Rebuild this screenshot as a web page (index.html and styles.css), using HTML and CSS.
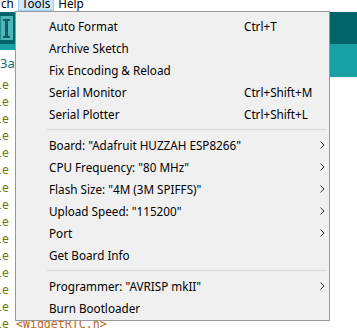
FILE: index.html
```html
<!DOCTYPE html>
<html>
<head>
  <meta charset="utf-8">
  <title>Arduino - Tools menu</title>
  <link rel="stylesheet" href="styles.css">
</head>
<body>
  <div class="window">
    <div class="menubar">
      <span class="menu-title first">ch</span>
      <span class="menu-title active">Tools</span>
      <span class="menu-title">Help</span>
    </div>

    <div class="toolbar">
      <svg class="tool-btn" width="16" height="32" viewBox="0 0 16 32">
        <rect x="0" y="4" width="13" height="24" fill="#4db7bb"/>
        <rect x="0" y="4" width="1" height="24" fill="#1f8a8e"/>
        <rect x="3" y="7" width="7" height="2" fill="#0b5f63"/>
        <rect x="5" y="9" width="3" height="16" fill="#0b5f63"/>
        <rect x="3" y="24" width="7" height="2" fill="#0b5f63"/>
        <rect x="14" y="13" width="1" height="2" fill="#0b5f63"/>
      </svg>
    </div>

    <div class="tabbar">
      <div class="tab">3a</div>
    </div>

    <div class="editor">
      <div class="line">le</div>
      <div class="line">le</div>
      <div class="line">le</div>
      <div class="line">le</div>
      <div class="line">le</div>
      <div class="line">le</div>
      <div class="line">le</div>
      <div class="line">le</div>
      <div class="line">le</div>
      <div class="line">le</div>
      <div class="line">le</div>
      <div class="line">le</div>
      <div class="line">le</div>
      <div class="line">le</div>
      <div class="line">le <span class="lib">&lt;WidgetRTC.h&gt;</span></div>
    </div>
  </div>

  <!-- Tools dropdown, open over the editor -->
  <div class="dropdown">
    <div class="item"><span>Auto Format</span><span>Ctrl+T</span></div>
    <div class="item"><span>Archive Sketch</span></div>
    <div class="item"><span>Fix Encoding &amp; Reload</span></div>
    <div class="item"><span>Serial Monitor</span><span>Ctrl+Shift+M</span></div>
    <div class="item"><span>Serial Plotter</span><span>Ctrl+Shift+L</span></div>
    <div class="sep"></div>
    <div class="item sub"><span>Board: "Adafruit HUZZAH ESP8266"</span><span></span>
      <svg class="arrow" width="5" height="8" viewBox="0 0 5 8"><path d="M0.5 0.5 L4 4 L0.5 7.5" fill="none" stroke="#333" stroke-width="1"/></svg></div>
    <div class="item sub"><span>CPU Frequency: "80 MHz"</span><span></span>
      <svg class="arrow" width="5" height="8" viewBox="0 0 5 8"><path d="M0.5 0.5 L4 4 L0.5 7.5" fill="none" stroke="#333" stroke-width="1"/></svg></div>
    <div class="item sub"><span>Flash Size: "4M (3M SPIFFS)"</span><span></span>
      <svg class="arrow" width="5" height="8" viewBox="0 0 5 8"><path d="M0.5 0.5 L4 4 L0.5 7.5" fill="none" stroke="#333" stroke-width="1"/></svg></div>
    <div class="item sub"><span>Upload Speed: "115200"</span><span></span>
      <svg class="arrow" width="5" height="8" viewBox="0 0 5 8"><path d="M0.5 0.5 L4 4 L0.5 7.5" fill="none" stroke="#333" stroke-width="1"/></svg></div>
    <div class="item sub"><span>Port</span><span></span>
      <svg class="arrow" width="5" height="8" viewBox="0 0 5 8"><path d="M0.5 0.5 L4 4 L0.5 7.5" fill="none" stroke="#333" stroke-width="1"/></svg></div>
    <div class="item"><span>Get Board Info</span></div>
    <div class="sep"></div>
    <div class="item sub"><span>Programmer: "AVRISP mkII"</span><span></span>
      <svg class="arrow" width="5" height="8" viewBox="0 0 5 8"><path d="M0.5 0.5 L4 4 L0.5 7.5" fill="none" stroke="#333" stroke-width="1"/></svg></div>
    <div class="item"><span>Burn Bootloader</span></div>
  </div>
</body>
</html>
```

FILE: styles.css
```css
html, body {
  margin: 0;
  padding: 0;
}
body {
  width: 357px;
  height: 328px;
  overflow: hidden;
  position: relative;
  background-color: #fff;
  font-family: "Noto Sans", "Open Sans", sans-serif;
  font-size: 11.7px;
  color: #000;
}
.menubar {
  display: flex;
  align-items: flex-end;
  height: 12px;
  padding-bottom: 1px;
  box-sizing: border-box;
  overflow: hidden;
  background-color: #fff;
}
.menu-title {
  line-height: 13px;
  padding: 0 3px;
  border: 1px solid transparent;
  white-space: nowrap;
}
.menu-title.first {
  padding-left: 0;
}
.menu-title.active {
  background-color: #cce8ff;
  border-color: #99d1ff;
}
.toolbar {
  height: 32px;
  background-color: #006468;
}
.tool-btn {
  display: block;
}
.tabbar {
  height: 33px;
  background-color: #17a1a5;
  display: flex;
  align-items: flex-end;
}
.tab {
  height: 27px;
  width: 60px;
  background-color: #fff;
  color: #0b6f75;
  font-size: 13px;
  line-height: 27px;
}
.editor {
  margin-left: -5px;
  font-family: "DejaVu Sans Mono", monospace;
  font-size: 11.6px;
  color: #6f7a00;
}
.line {
  height: 17.1px;
  line-height: 17.1px;
  white-space: pre;
}
.lib {
  color: #c0661a;
}
.dropdown {
  position: absolute;
  left: 15px;
  top: 11px;
  width: 315px;
  box-sizing: border-box;
  border: 1px solid #999;
  background-color: #f0f0f0;
  padding: 3px 0 1px;
}
.item {
  display: grid;
  grid-template-columns: 195px 1fr 9px;
  align-items: center;
  height: 22px;
  padding: 0 4px 0 33px;
  white-space: nowrap;
}
.arrow {
  justify-self: end;
  display: block;
}
.sep {
  height: 1px;
  background-color: #d7d7d7;
  margin: 4px 2px 4px 31px;
}
```
